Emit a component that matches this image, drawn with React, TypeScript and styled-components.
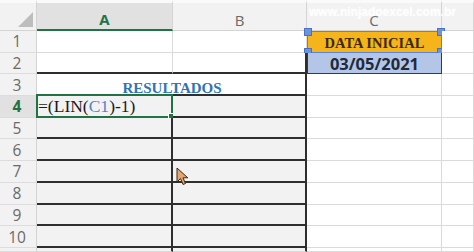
import styled, { createGlobalStyle } from 'styled-components';

const GlobalStyle = createGlobalStyle`
  html, body {
    margin: 0;
    padding: 0;
    background: #ffffff;
    overflow: hidden;
  }
`;

const serif = "'Liberation Serif', 'DejaVu Serif', serif";

const Sheet = styled.div`
  position: relative;
  width: 474px;
  height: 252px;
  display: grid;
  grid-template-columns: 37px 136px 134px 135px 1fr;
  grid-template-rows: 31px repeat(10, 21.7px) 1fr;
  background: #ffffff;
  font-family: 'Open Sans', 'Liberation Sans', sans-serif;
  overflow: hidden;
`;

const Corner = styled.div`
  position: relative;
  background: #f2f2f2;
  border-top: 3px solid #fafafa;
  border-right: 1px solid #d4d4d4;
  border-bottom: 1px solid #d4d4d4;
  box-sizing: border-box;

  &::after {
    content: '';
    position: absolute;
    right: 3px;
    bottom: 3px;
    width: 0;
    height: 0;
    border-left: 15px solid transparent;
    border-bottom: 15px solid #bdbdbd;
  }
`;

const ColHead = styled.div<{ $active?: boolean }>`
  position: relative;
  display: flex;
  align-items: center;
  justify-content: center;
  box-sizing: border-box;
  padding-top: 6px;
  background: ${(p) => (p.$active ? '#e1e1e1' : '#f2f2f2')};
  border-top: 3px solid #fafafa;
  border-right: 1px solid #d4d4d4;
  border-bottom: ${(p) => (p.$active ? '2px solid #217346' : '1px solid #d4d4d4')};
  color: ${(p) => (p.$active ? '#217346' : '#6a6a6a')};
  font-weight: ${(p) => (p.$active ? 700 : 400)};
  font-size: 15px;
`;

const Watermark = styled.span`
  position: absolute;
  z-index: 2;
  left: 2px;
  top: 2px;
  color: rgba(255, 255, 255, 0.9);
  font-family: 'Liberation Sans', sans-serif;
  font-weight: 700;
  font-size: 12px;
  white-space: nowrap;
  text-shadow: 0 0 2px rgba(255, 255, 255, 0.7);
`;

const RowHead = styled.div<{ $active?: boolean }>`
  display: flex;
  align-items: center;
  justify-content: center;
  box-sizing: border-box;
  background: ${(p) => (p.$active ? '#e1e1e1' : '#f2f2f2')};
  border-right: 1px solid #d4d4d4;
  border-bottom: 1px solid #dcdcdc;
  color: ${(p) => (p.$active ? '#217346' : '#6a6a6a')};
  font-weight: ${(p) => (p.$active ? 700 : 400)};
  font-size: 15.5px;
  padding-right: 2px;
`;

const Cell = styled.div<{ $bg?: string; $thickBottom?: boolean; $thickRight?: boolean; $span?: number }>`
  position: relative;
  box-sizing: border-box;
  grid-column: span ${(p) => p.$span ?? 1};
  background: ${(p) => p.$bg ?? '#ffffff'};
  border-right: ${(p) => (p.$thickRight ? '2px solid #2e2e2e' : '1px solid #dadada')};
  border-bottom: ${(p) => (p.$thickBottom ? '2px solid #2e2e2e' : '1px solid #dadada')};
  display: flex;
  align-items: center;
`;

const Title = styled.span`
  width: 100%;
  text-align: center;
  color: #2e75b6;
  font-family: ${serif};
  font-weight: 700;
  font-size: 15px;
  padding-top: 8px;
  padding-left: 2px;
`;

const Formula = styled.span`
  font-family: ${serif};
  font-size: 17.5px;
  color: #1a1a1a;
  padding-left: 1px;
  padding-top: 1px;
  white-space: nowrap;
`;

const Ref = styled.span`
  color: #5b7fc7;
`;

const Selection = styled.div`
  position: absolute;
  inset: -2px -2px -2px -1px;
  border: 2px solid #217346;
  pointer-events: none;

  &::after {
    content: '';
    position: absolute;
    right: -4px;
    bottom: -4px;
    width: 5px;
    height: 5px;
    background: #217346;
    border: 1px solid #ffffff;
  }
`;

const Label = styled.div<{ $bg: string; $serif?: boolean }>`
  position: relative;
  box-sizing: border-box;
  background: ${(p) => p.$bg};
  border: 1px solid #3a3a3a;
  border-top-width: ${(p) => (p.$serif ? '1px' : '0')};
  display: flex;
  align-items: center;
  justify-content: center;
  color: ${(p) => (p.$serif ? '#3b2a05' : '#1f2b3a')};
  font-family: ${(p) => (p.$serif ? serif : "'Open Sans', 'Liberation Sans', sans-serif")};
  font-weight: 700;
  font-size: ${(p) => (p.$serif ? '14.5px' : '16.5px')};
  padding-top: ${(p) => (p.$serif ? '3px' : '0')};
`;

const RefBox = styled.div`
  position: absolute;
  inset: -1px;
  border: 1px solid #5b84d6;
  pointer-events: none;
`;

const Handle = styled.span<{ $x: 'left' | 'right'; $y: 'top' | 'bottom' }>`
  position: absolute;
  ${(p) => p.$x}: -4px;
  ${(p) => p.$y}: -4px;
  width: 6px;
  height: 6px;
  background: #6b93e0;
  border: 1px solid #4a72c4;
`;

const Cursor = styled.svg`
  position: absolute;
  left: 176px;
  top: 167px;
  width: 13px;
  height: 19px;
  pointer-events: none;
`;

const blankRows = [5, 6, 7, 8, 9, 10];

function PlainRow({ n }: { n: number }) {
  return (
    <>
      <RowHead>{n}</RowHead>
      <Cell $bg="#f2f2f2" $thickBottom $thickRight />
      <Cell $bg="#f2f2f2" $thickBottom $thickRight />
      <Cell />
      <Cell />
    </>
  );
}

export default function App() {
  return (
    <>
      <GlobalStyle />
      <Sheet>
        <Corner />
        <ColHead $active>A</ColHead>
        <ColHead>B</ColHead>
        <ColHead>
          C
          <Watermark>www.ninjadoexcel.com.br</Watermark>
        </ColHead>
        <ColHead />

        <RowHead>1</RowHead>
        <Cell />
        <Cell />
        <Label $bg="#f4b41a" $serif>
          DATA INICIAL
          <RefBox>
            <Handle $x="left" $y="top" />
            <Handle $x="right" $y="top" />
            <Handle $x="left" $y="bottom" />
            <Handle $x="right" $y="bottom" />
          </RefBox>
        </Label>
        <Cell />

        <RowHead>2</RowHead>
        <Cell $thickBottom />
        <Cell $thickBottom $thickRight />
        <Label $bg="#b4c6e7">03/05/2021</Label>
        <Cell />

        <RowHead>3</RowHead>
        <Cell $span={2} $thickBottom $thickRight>
          <Title>RESULTADOS</Title>
        </Cell>
        <Cell />
        <Cell />

        <RowHead $active>4</RowHead>
        <Cell $bg="#f2f2f2" $thickBottom $thickRight>
          <Formula>
            =(LIN(<Ref>C1</Ref>)-1)
          </Formula>
          <Selection />
        </Cell>
        <Cell $bg="#f2f2f2" $thickBottom $thickRight />
        <Cell />
        <Cell />

        {blankRows.map((n) => (
          <PlainRow key={n} n={n} />
        ))}

        <RowHead />
        <Cell $bg="#f2f2f2" $thickRight />
        <Cell $bg="#f2f2f2" $thickRight />
        <Cell />
        <Cell />

        <Cursor viewBox="0 0 13 19">
          <path
            d="M1 1 L1 15 L4.5 11.5 L7 17.5 L9.5 16.5 L7 10.8 L11.8 10.8 Z"
            fill="#e8a56a"
            stroke="#3a2a1a"
            strokeWidth="1"
            strokeLinejoin="round"
          />
        </Cursor>
      </Sheet>
    </>
  );
}
